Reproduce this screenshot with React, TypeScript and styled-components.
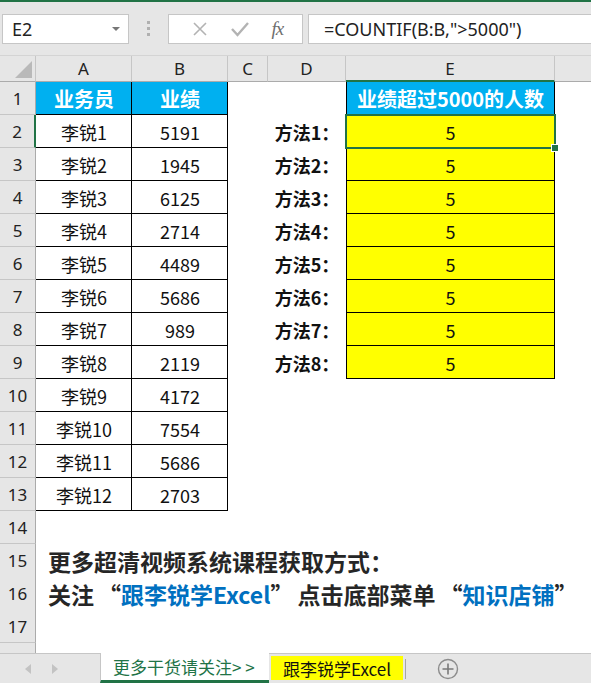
import React from 'react';
import styled, { createGlobalStyle, css } from 'styled-components';

const GlobalStyle = createGlobalStyle`
  html, body {
    margin: 0;
    padding: 0;
    background: #fff;
  }
  body {
    width: 591px;
    height: 683px;
    overflow: hidden;
    font-family: "Noto Sans CJK SC", "Noto Sans", sans-serif;
  }
`;

const COLS = '36px 96px 96px 40px 78px 209px 1fr';
const GREEN = '#217346';

const names = ['李锐1', '李锐2', '李锐3', '李锐4', '李锐5', '李锐6', '李锐7', '李锐8', '李锐9', '李锐10', '李锐11', '李锐12'];
const scores = [5191, 1945, 6125, 2714, 4489, 5686, 989, 2119, 4172, 7554, 5686, 2703];

function App() {
  const rows = Array.from({ length: 14 }, (_, i) => i + 1);

  return (
    <Window>
      <GlobalStyle />
      <Toolbar>
        <NameBox>
          <span>E2</span>
          <Caret />
        </NameBox>
        <Grip>
          <i />
          <i />
          <i />
        </Grip>
        <FxBox>
          <svg width="16" height="16" viewBox="0 0 16 16">
            <path d="M2 2 L14 14 M14 2 L2 14" stroke="#b3b3b3" strokeWidth="1.6" fill="none" />
          </svg>
          <svg width="20" height="16" viewBox="0 0 20 16">
            <path d="M2 8 L7.5 14 L18 2" stroke="#b3b3b3" strokeWidth="2.4" fill="none" />
          </svg>
          <FxText>fx</FxText>
        </FxBox>
        <FormulaBox>=COUNTIF(B:B,"&gt;5000")</FormulaBox>
      </Toolbar>

      <Sheet>
        <Row $h={26}>
          <Corner>
            <svg width="20" height="20" viewBox="0 0 20 20">
              <polygon points="19,2 19,19 2,19" fill="#b9b9b9" />
            </svg>
          </Corner>
          <ColHead>A</ColHead>
          <ColHead>B</ColHead>
          <ColHead>C</ColHead>
          <ColHead>D</ColHead>
          <ColHead $active>E</ColHead>
          <ColHead $last />
        </Row>

        {rows.map((r) => {
          const data = r >= 2 && r <= 13;
          const method = r >= 2 && r <= 9;
          return (
            <Row key={r}>
              <RowHead $active={r === 2}>{r}</RowHead>
              {r === 1 ? (
                <>
                  <Cell $bg="#00b0f0" $box $head>业务员</Cell>
                  <Cell $bg="#00b0f0" $box $head>业绩</Cell>
                  <Cell />
                  <Cell />
                  <Cell $bg="#00b0f0" $box $left $head>业绩超过5000的人数</Cell>
                  <Cell />
                </>
              ) : (
                <>
                  <Cell $box={data}>{data ? names[r - 2] : ''}</Cell>
                  <Cell $box={data}>{data ? scores[r - 2] : ''}</Cell>
                  <Cell />
                  <Cell $bold>{method ? `方法${r - 1}：` : ''}</Cell>
                  {method ? (
                    <Cell $bg="#ffff00" $box $left $selected={r === 2}>5</Cell>
                  ) : (
                    <Cell />
                  )}
                  <Cell />
                </>
              )}
            </Row>
          );
        })}

        <Row>
          <RowHead>15</RowHead>
          <Note>更多超清视频系统课程获取方式：</Note>
        </Row>
        <Row>
          <RowHead>16</RowHead>
          <Note>
            关注<Quote $open>“</Quote><Hl>跟李锐学Excel</Hl><Quote>”</Quote>点击底部菜单<Quote $open>“</Quote><Hl>知识店铺</Hl><Quote>”</Quote>
          </Note>
        </Row>
        <Row>
          <RowHead>17</RowHead>
        </Row>
        <Row>
          <RowHead />
        </Row>
      </Sheet>

      <TabBar>
        <TabNav>
          <svg width="8" height="12" viewBox="0 0 8 12">
            <polygon points="7,1 7,11 1,6" fill="#c3c3c3" />
          </svg>
          <svg width="8" height="12" viewBox="0 0 8 12">
            <polygon points="1,1 1,11 7,6" fill="#c3c3c3" />
          </svg>
        </TabNav>
        <Tab $active>更多干货请关注&gt; &gt;</Tab>
        <Tab $color="#ffff00">跟李锐学Excel</Tab>
        <TabDivider />
        <AddSheet>
          <svg width="22" height="22" viewBox="0 0 22 22">
            <circle cx="11" cy="11" r="9.5" stroke="#8c8c8c" strokeWidth="1.4" fill="none" />
            <path d="M11 5.5 V16.5 M5.5 11 H16.5" stroke="#7a7a7a" strokeWidth="1.6" />
          </svg>
        </AddSheet>
      </TabBar>
    </Window>
  );
}

export default App;

const Window = styled.div`
  display: flex;
  flex-direction: column;
  width: 591px;
  height: 683px;
  overflow: hidden;
`;

const Toolbar = styled.div`
  display: flex;
  align-items: center;
  box-sizing: border-box;
  height: 56px;
  padding-left: 2px;
  border-top: 2px solid ${GREEN};
  border-bottom: 1px solid #d4d4d4;
  background: #e6e6e6;
`;

const boxBase = css`
  display: flex;
  align-items: center;
  box-sizing: border-box;
  height: 30px;
  background: #fff;
  border: 1px solid #c6c6c6;
`;

const NameBox = styled.div`
  ${boxBase};
  justify-content: space-between;
  width: 127px;
  padding: 0 8px 0 9px;
  font-family: "Noto Sans", sans-serif;
  font-size: 18px;
  color: #222;
`;

const Caret = styled.span`
  width: 0;
  height: 0;
  border-left: 4px solid transparent;
  border-right: 4px solid transparent;
  border-top: 4px solid #777;
`;

const Grip = styled.div`
  display: flex;
  flex-direction: column;
  align-items: center;
  gap: 3px;
  width: 39px;

  i {
    display: block;
    width: 3px;
    height: 3px;
    background: #b0b0b0;
  }
`;

const FxBox = styled.div`
  ${boxBase};
  justify-content: space-around;
  width: 135px;
  padding: 0 8px 0 12px;
`;

const FxText = styled.span`
  font-family: "Liberation Serif", serif;
  font-style: italic;
  font-size: 19px;
  color: #6e6e6e;
  letter-spacing: -1px;
`;

const FormulaBox = styled.div`
  ${boxBase};
  flex: 1;
  margin-left: 5px;
  border-right: none;
  padding-left: 15px;
  font-family: "Noto Sans", sans-serif;
  font-size: 18px;
  color: #222;
  white-space: nowrap;
`;

const Sheet = styled.div`
  flex: 1;
  overflow: hidden;
  background: #fff;
`;

const Row = styled.div<{ $h?: number }>`
  display: grid;
  grid-template-columns: ${COLS};
  height: ${(p) => p.$h ?? 33}px;
`;

const headBase = css`
  display: flex;
  align-items: center;
  justify-content: center;
  box-sizing: border-box;
  background: #e6e6e6;
  font-family: "Noto Sans", sans-serif;
  font-size: 17px;
  color: #222;
`;

const Corner = styled.div`
  ${headBase};
  justify-content: flex-end;
  align-items: flex-end;
  padding: 0 2px 2px 0;
  border-right: 1px solid #c6c6c6;
  border-bottom: 1px solid #ababab;
`;

const ColHead = styled.div<{ $active?: boolean; $last?: boolean }>`
  ${headBase};
  border-right: ${(p) => (p.$last ? 'none' : '1px solid #c6c6c6')};
  border-bottom: 1px solid #ababab;
  ${(p) =>
    p.$active &&
    css`
      border-bottom: 2px solid ${GREEN};
    `}
`;

const RowHead = styled.div<{ $active?: boolean }>`
  ${headBase};
  border-right: 1px solid #ababab;
  border-bottom: 1px solid #c6c6c6;
  ${(p) =>
    p.$active &&
    css`
      border-right: 2px solid ${GREEN};
    `}
`;

const Cell = styled.div<{
  $bg?: string;
  $box?: boolean;
  $left?: boolean;
  $head?: boolean;
  $bold?: boolean;
  $selected?: boolean;
}>`
  display: flex;
  align-items: center;
  justify-content: center;
  position: relative;
  background: ${(p) => p.$bg ?? '#fff'};
  font-size: ${(p) => (p.$head ? 20 : 18)}px;
  font-weight: ${(p) => (p.$head || p.$bold ? 700 : 400)};
  color: ${(p) => (p.$head ? '#fff' : '#111')};
  white-space: nowrap;
  box-shadow: ${(p) =>
    p.$box
      ? p.$left
        ? 'inset -1px -1px 0 #000, inset 1px 0 0 #000'
        : 'inset -1px -1px 0 #000'
      : 'none'};

  ${(p) =>
    p.$selected &&
    css`
      z-index: 1;
      box-shadow: 0 0 0 1px ${GREEN}, inset 0 0 0 1px ${GREEN};

      &::after {
        content: '';
        position: absolute;
        right: -4px;
        bottom: -4px;
        width: 6px;
        height: 6px;
        background: ${GREEN};
        border: 1px solid #fff;
      }
    `}
`;

const Note = styled.div`
  grid-column: 2 / -1;
  display: flex;
  align-items: center;
  padding-left: 12px;
  font-size: 23px;
  font-weight: 700;
  color: #262626;
  white-space: nowrap;
`;

const Quote = styled.span<{ $open?: boolean }>`
  ${(p) => (p.$open ? 'margin-left: 4px;' : 'margin-right: 4px;')}
`;

const Hl = styled.span`
  color: #0070c0;
`;

const TabBar = styled.div`
  display: flex;
  align-items: stretch;
  box-sizing: border-box;
  height: 30px;
  border-top: 1px solid #c6c6c6;
  background: #e6e6e6;
`;

const TabNav = styled.div`
  display: flex;
  align-items: center;
  gap: 19px;
  width: 100px;
  padding-left: 24px;
  box-sizing: border-box;
`;

const Tab = styled.div<{ $active?: boolean; $color?: string }>`
  display: flex;
  align-items: center;
  box-sizing: border-box;
  padding-left: 12px;
  font-size: 17px;
  white-space: nowrap;
  ${(p) =>
    p.$active
      ? css`
          width: 169px;
          margin-top: -1px;
          background: #fff;
          color: ${GREEN};
          border-left: 1px solid #c6c6c6;
          border-bottom: 3px solid ${GREEN};
        `
      : css`
          width: 132px;
          margin: 2px 0 3px 2px;
          background: ${p.$color ?? 'transparent'};
          color: #111;
        `}
`;

const TabDivider = styled.div`
  align-self: center;
  width: 1px;
  height: 20px;
  margin-left: 2px;
  background: #a6a6a6;
`;

const AddSheet = styled.div`
  display: flex;
  align-items: center;
  margin-left: 31px;
`;
